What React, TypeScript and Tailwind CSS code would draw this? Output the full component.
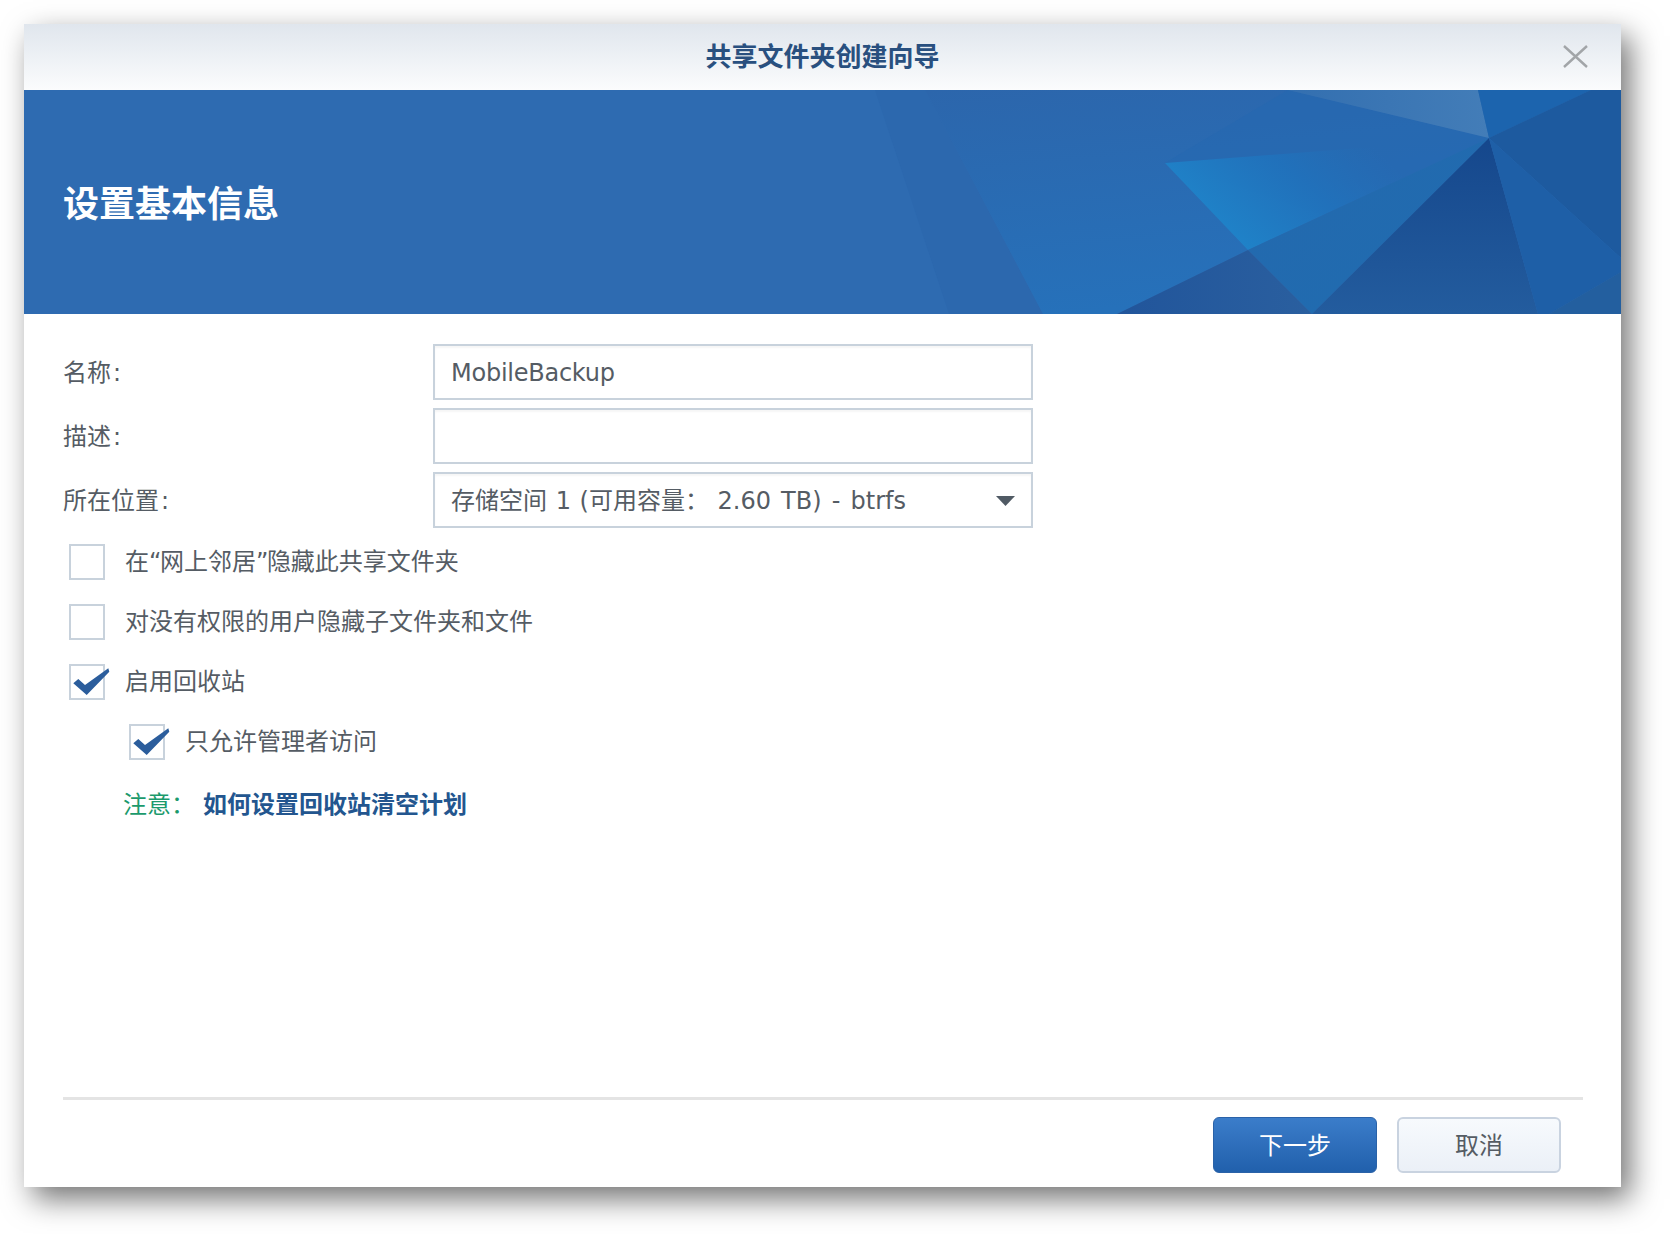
import React from "react";

const font = { fontFamily: '"DejaVu Sans", "Noto Sans CJK SC", sans-serif' };

function Banner() {
  return (
    <svg className="absolute inset-0 h-full w-full" viewBox="0 0 1597 224" preserveAspectRatio="none" aria-hidden="true">
      <defs>
        <linearGradient id="g1" x1="0" y1="0" x2="0.25" y2="1">
          <stop offset="0" stopColor="#2c66ac" />
          <stop offset="1" stopColor="#2671ba" />
        </linearGradient>
        <linearGradient id="g2" gradientUnits="userSpaceOnUse" x1="1330" y1="40" x2="1224" y2="160">
          <stop offset="0" stopColor="#2270b8" stopOpacity="0" />
          <stop offset="0.45" stopColor="#2072bc" stopOpacity="0.85" />
          <stop offset="1" stopColor="#1f82c8" />
        </linearGradient>
        <linearGradient id="g3" x1="0" y1="0" x2="1" y2="0">
          <stop offset="0" stopColor="#336fb0" />
          <stop offset="1" stopColor="#437db8" />
        </linearGradient>
        <linearGradient id="g4" x1="0" y1="0" x2="0" y2="1">
          <stop offset="0" stopColor="#15478c" />
          <stop offset="1" stopColor="#235c9e" />
        </linearGradient>
        <linearGradient id="g5" x1="0" y1="0" x2="1" y2="1">
          <stop offset="0" stopColor="#2469ae" />
          <stop offset="1" stopColor="#1f6cb0" />
        </linearGradient>
        <linearGradient id="g6" x1="0" y1="0" x2="1" y2="0">
          <stop offset="0" stopColor="#21559b" />
          <stop offset="1" stopColor="#2a5f9f" />
        </linearGradient>
      </defs>
      <polygon points="851,0 901,0 1019,224 925,224" fill="#2c68ae" />
      <polygon points="901,0 1264,0 1465,48 1224,160 1093,224 1019,224" fill="url(#g1)" />
      <polygon points="1264,0 1465,48 1300,125 1141,73" fill="#2568b0" fillOpacity="0.55" />
      <polygon points="1141,73 1465,48 1224,160" fill="url(#g2)" />
      <polygon points="1264,0 1454,0 1465,48" fill="url(#g3)" />
      <polygon points="1454,0 1567,0 1465,48" fill="#1c64ae" />
      <polygon points="1567,0 1597,0 1597,168 1465,48" fill="#1d5a9f" />
      <polygon points="1465,48 1224,160 1288,224" fill="url(#g5)" />
      <polygon points="1465,48 1288,224 1514,224" fill="url(#g4)" />
      <polygon points="1465,48 1597,168 1597,182 1525,224 1514,224" fill="#1e5fa7" />
      <polygon points="1093,224 1224,160 1288,224" fill="url(#g6)" />
      <polygon points="1597,182 1597,224 1525,224" fill="#235f9f" />
    </svg>
  );
}

function Check() {
  return (
    <svg className="absolute left-0 top-0 h-[36px] w-[42px]" viewBox="0 0 42 36" aria-hidden="true">
      <polygon points="4.3,19.3 9.3,15 16,21 39.3,4.3 40.3,7.7 17.7,31" fill="#2b5d9c" />
    </svg>
  );
}

function CheckRow({ children, checked, indent }: { children: React.ReactNode; checked?: boolean; indent?: boolean }) {
  return (
    <div className={`flex h-[36px] items-center gap-[20px] ${indent ? "ml-[66px]" : "ml-[6px]"}`}>
      <span className="relative h-[36px] w-[36px] shrink-0 border-2 border-[#c8d2dc] bg-white">
        {checked ? <span className="absolute -left-[2px] -top-[2px]"><Check /></span> : null}
      </span>
      <span>{children}</span>
    </div>
  );
}

function Field({ label, children }: { label: string; children?: React.ReactNode }) {
  return (
    <div className="flex h-[56px] items-center">
      <div className="w-[370px] shrink-0 pt-[2px]">
        {label}
        <span className="pl-[2px]">:</span>
      </div>
      <div className="flex h-[56px] w-[600px] items-center justify-between border-2 border-[#c8d2dc] bg-white pl-[16px] pr-[16px] pt-[2px] shadow-[inset_0_2px_2px_rgba(0,0,0,0.04)]">
        {children}
      </div>
    </div>
  );
}

export default function App() {
  return (
    <div className="h-[1234px] w-[1670px] overflow-hidden bg-white pl-[24px] pt-[24px] text-[24px] leading-none text-[#555c64]" style={font}>
      <div className="flex h-[1163px] w-[1597px] flex-col bg-white shadow-[9px_12px_28px_rgba(0,0,0,0.55)]">
        <div className="relative flex h-[66px] shrink-0 items-center justify-center bg-gradient-to-b from-[#e0e6ed] to-[#fbfcfd]">
          <span className="text-[26px] font-bold text-[#29507f]">共享文件夹创建向导</span>
          <svg className="absolute right-[33px] top-[21px] h-[23px] w-[25px]" viewBox="0 0 25 23" aria-hidden="true">
            <path d="M1 1 L24 22 M24 1 L1 22" stroke="#a2a5a8" strokeWidth="2.4" fill="none" />
          </svg>
        </div>
        <div className="relative flex h-[224px] shrink-0 items-center bg-[#2e6bb1] pl-[39px]">
          <Banner />
          <span className="relative pt-[6px] text-[36px] font-bold text-white">设置基本信息</span>
        </div>
        <div className="flex flex-1 flex-col px-[39px] pt-[30px]">
          <div className="flex flex-col gap-[8px]">
            <Field label="名称">
              <span className="tracking-[-0.25px]">MobileBackup</span>
            </Field>
            <Field label="描述" />
            <Field label="所在位置">
              <span className="whitespace-pre">
                <span className="[word-spacing:1px]">存储空间 1 (可用容量： </span>
                <span className="[word-spacing:2.5px]">2.60 TB) - btrfs</span>
              </span>
              <svg className="h-[10px] w-[19px]" viewBox="0 0 19 10" aria-hidden="true">
                <polygon points="0,0 19,0 9.5,10" fill="#505a64" />
              </svg>
            </Field>
          </div>
          <div className="mt-[16px] flex flex-col gap-[24px]">
            <CheckRow>
              在<span className="tracking-[-1.5px]">“</span>网上邻居<span className="tracking-[-1.5px]">”</span>隐藏此共享文件夹
            </CheckRow>
            <CheckRow>对没有权限的用户隐藏子文件夹和文件</CheckRow>
            <CheckRow checked>启用回收站</CheckRow>
            <CheckRow checked indent>只允许管理者访问</CheckRow>
          </div>
          <div className="ml-[60px] mt-[33px] flex items-center gap-[8px]">
            <span className="w-[72px] text-[#1b9a6c]">注意：</span>
            <span className="font-bold text-[#23568f]">如何设置回收站清空计划</span>
          </div>
          <div className="mt-auto h-[3px] w-[1520px] bg-[#e4e4e4]" />
          <div className="flex justify-end gap-[20px] pb-[14px] pr-[21px] pt-[17px]">
            <button className="h-[56px] w-[164px] rounded-[6px] border border-[#2a62a8] bg-gradient-to-b from-[#3b7dca] to-[#2160ac] pt-[2px] text-white">下一步</button>
            <button className="h-[56px] w-[164px] rounded-[6px] border-2 border-[#c9d3e0] bg-gradient-to-b from-[#f7fafd] to-[#ebf0f7] pt-[2px] text-[#555c64]">取消</button>
          </div>
        </div>
      </div>
    </div>
  );
}
